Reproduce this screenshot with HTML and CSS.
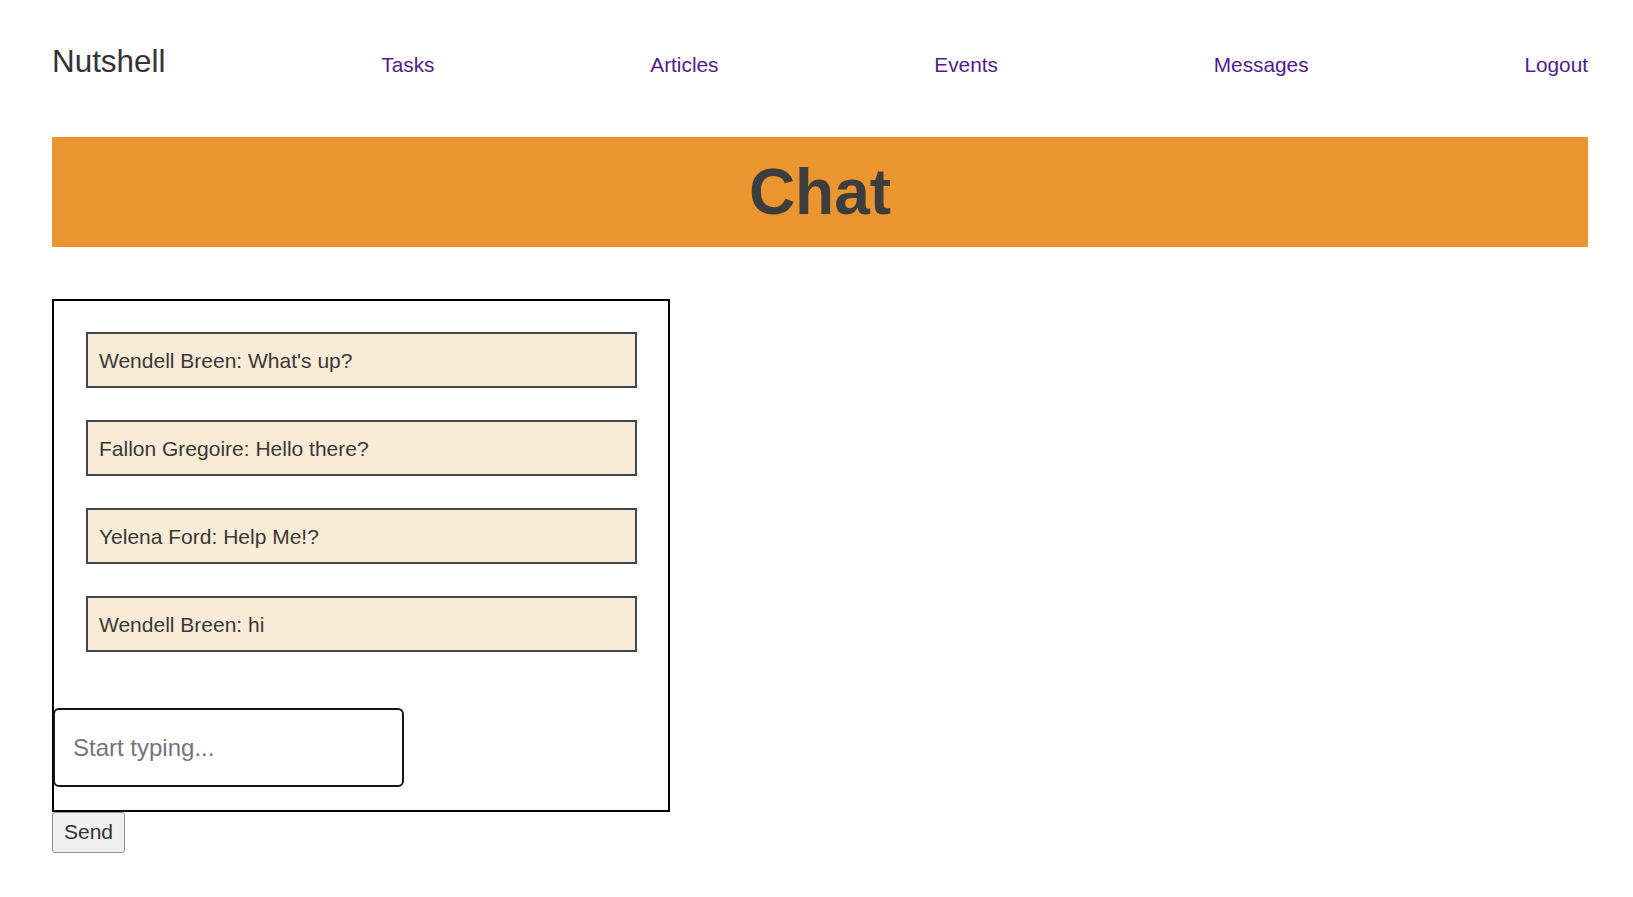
FILE: index.html
```html
<!DOCTYPE html>
<html lang="en">
<head>
<meta charset="utf-8">
<title>Nutshell</title>
<link rel="stylesheet" href="styles.css">
</head>
<body>
<div class="page">
  <nav class="topnav">
    <span class="brand">Nutshell</span>
    <a class="navlink" href="#tasks">Tasks</a>
    <a class="navlink" href="#articles">Articles</a>
    <a class="navlink" href="#events">Events</a>
    <a class="navlink" href="#messages">Messages</a>
    <a class="navlink" href="#logout">Logout</a>
  </nav>
  <header class="banner">
    <h1 class="banner-title">Chat</h1>
  </header>
  <section class="chat">
    <div class="messages">
      <div class="message">Wendell Breen: What's up?</div>
      <div class="message">Fallon Gregoire: Hello there?</div>
      <div class="message">Yelena Ford: Help Me!?</div>
      <div class="message">Wendell Breen: hi</div>
    </div>
    <input class="chat-input" type="text" placeholder="Start typing..." autofocus>
  </section>
  <button class="send-btn" type="button">Send</button>
</div>
</body>
</html>
```
FILE: styles.css
```css
html, body {
  margin: 0;
  padding: 0;
  background: #ffffff;
}

body {
  font-family: "Liberation Sans", Arial, sans-serif;
  color: #333333;
}

.page {
  padding: 43px 45px 30px 52px;
}

.topnav {
  display: flex;
  justify-content: space-between;
  align-items: baseline;
}

.brand {
  font-size: 31.4px;
  color: #333333;
  line-height: 37px;
}

.navlink {
  font-size: 20.8px;
  color: #551a8b;
  text-decoration: none;
}

.banner {
  margin-top: 57px;
  background: #ea952f;
  height: 110px;
  display: flex;
  align-items: center;
  justify-content: center;
}

.banner-title {
  margin: 0;
  font-size: 64px;
  font-weight: bold;
  color: #3d3d3d;
  line-height: 110px;
}

.chat {
  margin-top: 52px;
  width: 614px;
  border: 2px solid #000000;
  padding: 31px 0 23px 0;
  display: flex;
  flex-direction: column;
  align-items: flex-start;
}

.messages {
  align-self: stretch;
  display: flex;
  flex-direction: column;
  gap: 32px;
  padding: 0 31px 0 32px;
}

.message {
  background: #faebd7;
  border: 2px solid #444444;
  padding: 15px 11px 13px 11px;
  font-size: 21px;
  line-height: 24px;
  color: #383838;
}

.chat-input {
  margin-top: 56px;
  margin-left: -1px;
  width: 351px;
  height: 79px;
  box-sizing: border-box;
  border: 2px solid #161616;
  border-radius: 6px;
  padding: 0 18px;
  font-family: "Liberation Sans", Arial, sans-serif;
  font-size: 24px;
  color: #333333;
  outline: none;
  background: #ffffff;
}

.chat-input::placeholder {
  color: #757575;
}

.send-btn {
  display: block;
  margin-top: 0;
  font-family: "Liberation Sans", Arial, sans-serif;
  font-size: 21px;
  line-height: 24px;
  padding: 7px 11px 8px 11px;
  color: #333333;
  background: #efefef;
  border: 1px solid #8f8f8f;
  border-radius: 3px;
}
```
